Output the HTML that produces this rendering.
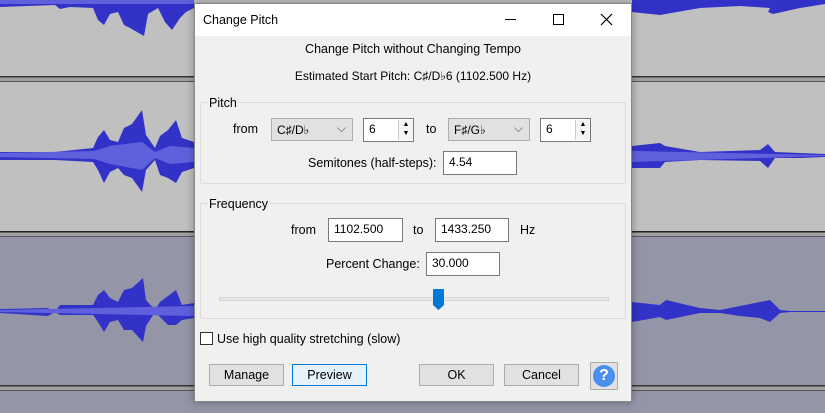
<!DOCTYPE html>
<html><head><style>
*{margin:0;padding:0;box-sizing:border-box}
body{width:825px;height:413px;overflow:hidden;position:relative;font-family:"Liberation Sans","DejaVu Sans",sans-serif;font-size:12px;color:#000;background:#9496a8}
.a{position:absolute}
.dlg{left:194px;top:3px;width:438px;height:399px;background:#f0f0f0;border:1px solid #888;box-shadow:0 0 8px rgba(0,0,0,.35)}
.t{position:absolute;white-space:nowrap}
.box{position:absolute;background:#fff;border:1px solid #7a7a7a;padding:3px 0 0 5px}
.cb{position:absolute;background:#e1e1e1;border:1px solid #adadad;padding:4px 0 0 5px}
.grp{position:absolute;border:1px solid #dcdcdc;border-radius:2px}
.btn{position:absolute;background:#e1e1e1;border:1px solid #adadad;text-align:center;line-height:21px;font-size:12.5px}
</style></head><body>
<svg class="a" style="left:0;top:0" width="825" height="413">
<rect x="0" y="0" width="825" height="76" fill="#c0c0c0"/>
<rect x="0" y="76" width="825" height="6" fill="#a0a0a0"/>
<rect x="0" y="76" width="825" height="1.5" fill="#333"/>
<rect x="0" y="81" width="825" height="1" fill="#555"/>
<rect x="0" y="82" width="825" height="149" fill="#c0c0c0"/>
<rect x="0" y="231" width="825" height="6" fill="#a0a0a0"/>
<rect x="0" y="231" width="825" height="1.5" fill="#222"/>
<rect x="0" y="236" width="825" height="1" fill="#555"/>
<rect x="0" y="237" width="825" height="148" fill="#9496a8"/>
<rect x="0" y="385" width="825" height="6" fill="#a0a0a0"/>
<rect x="0" y="385" width="825" height="1.5" fill="#333"/>
<rect x="0" y="390" width="825" height="1" fill="#555"/>
<!-- track1 -->
<polygon fill="#3232c8" points="0,0 0,7 55,5 60,9 70,7 93,8 98,20 104,25 110,14 118,12 124,25 130,28 144,36 148,14 158,8 165,22 172,30 180,18 186,12 194,8 194,0"/>
<polygon fill="#6060dc" points="0,0 0,4 194,4 194,0"/>
<polygon fill="#3232c8" points="632,0 632,12 660,15 700,8 740,6 770,8 768,12 773,14 800,8 825,4 825,0"/>
<!-- track2 -->
<polygon fill="#3232c8" points="0,152 55,152 93,148 98,137 104,130 110,140 118,142 124,128 132,124 142,110 146,135 155,148 160,136 168,130 176,120 182,138 194,142 194,168 182,172 176,183 168,178 160,175 155,160 146,170 142,192 132,178 124,175 118,168 110,172 104,183 98,170 93,162 55,160 0,160"/>
<polygon fill="#6060dc" points="0,153 94,151 110,146 142,142 155,152 170,146 194,148 194,162 170,164 155,158 142,170 110,164 94,159 0,157"/>
<polygon fill="#3232c8" points="632,146 660,143 665,146 700,152 760,150 768,144 775,152 800,153 825,154 825,157 800,158 775,158 768,168 760,161 700,160 665,162 660,168 632,168"/>
<polygon fill="#6060dc" points="632,151 825,155 825,156 632,162"/>
<!-- track3 -->
<polygon fill="#3232c8" points="0,309 48,308 55,312 60,305 93,305 98,295 104,290 110,298 118,302 124,290 132,288 143,278 146,300 155,310 160,302 168,296 176,290 182,305 194,303 194,318 182,320 176,325 168,325 155,312 146,326 143,342 132,330 124,330 118,320 110,322 104,332 98,322 93,315 60,315 55,312 48,316 0,313"/>
<polygon fill="#6060dc" points="0,310 194,306 194,316 0,312"/>
<polygon fill="#3232c8" points="632,302 660,305 666,300 700,308 720,310 740,306 760,302 770,300 780,310 790,311 825,311 825,312 790,312 780,313 770,322 760,318 740,316 720,313 700,313 666,320 660,317 632,322"/>
</svg>

<div class="a dlg">
  <div class="a" style="left:0;top:0;width:436px;height:32px;background:#fff"></div>
  <div class="t" style="left:8px;top:9px;font-size:12.5px">Change Pitch</div>
  <div class="a" style="left:310px;top:15px;width:11px;height:1px;background:#000"></div>
  <div class="a" style="left:358px;top:10px;width:11px;height:11px;border:1px solid #000"></div>
  <svg class="a" style="left:405px;top:9px" width="13" height="13"><path d="M1 1L12 12M12 1L1 12" stroke="#000" stroke-width="1.2"/></svg>

  <div class="t" style="left:0;width:436px;text-align:center;top:38px;font-size:12.5px">Change Pitch without Changing Tempo</div>
  <div class="t" style="left:0;width:436px;text-align:center;top:65px">Estimated Start Pitch: C♯/D♭6 (1102.500 Hz)</div>

  <div class="grp" style="left:5px;top:98px;width:426px;height:82px"></div>
  <div class="t" style="left:13px;top:92px;background:#f0f0f0;padding:0 1px;font-size:12.5px">Pitch</div>
  <div class="t" style="left:38px;top:118px;font-size:12.5px">from</div>
  <div class="cb" style="left:76px;top:114px;width:82px;height:23px">C♯/D♭<span style="position:absolute;right:6px;top:2px;color:#555">⌵</span></div>
  <div class="box" style="left:168px;top:114px;width:51px;height:24px">6</div>
  <div class="a" style="left:203px;top:116px;width:15px;height:20px;border-left:1px solid #ccc;font-size:7px;line-height:9px;text-align:center;background:#f4f4f4">▲<br>▼</div>
  <div class="t" style="left:231px;top:118px;font-size:12.5px">to</div>
  <div class="cb" style="left:253px;top:114px;width:82px;height:23px">F♯/G♭<span style="position:absolute;right:6px;top:2px;color:#555">⌵</span></div>
  <div class="box" style="left:345px;top:114px;width:51px;height:24px">6</div>
  <div class="a" style="left:380px;top:116px;width:15px;height:20px;border-left:1px solid #ccc;font-size:7px;line-height:9px;text-align:center;background:#f4f4f4">▲<br>▼</div>
  <div class="t" style="left:113px;top:152px;font-size:12.5px">Semitones (half-steps):</div>
  <div class="box" style="left:248px;top:147px;width:74px;height:24px">4.54</div>

  <div class="grp" style="left:5px;top:199px;width:426px;height:116px"></div>
  <div class="t" style="left:13px;top:193px;background:#f0f0f0;padding:0 1px;font-size:12.5px">Frequency</div>
  <div class="t" style="left:96px;top:219px;font-size:12.5px">from</div>
  <div class="box" style="left:133px;top:214px;width:75px;height:24px">1102.500</div>
  <div class="t" style="left:218px;top:219px;font-size:12.5px">to</div>
  <div class="box" style="left:240px;top:214px;width:74px;height:24px">1433.250</div>
  <div class="t" style="left:325px;top:219px;font-size:12.5px">Hz</div>
  <div class="t" style="left:131px;top:253px;font-size:12.5px">Percent Change:</div>
  <div class="box" style="left:231px;top:248px;width:74px;height:24px">30.000</div>
  <div class="a" style="left:24px;top:293px;width:390px;height:4px;background:#e7e7e7;border:1px solid #d6d6d6"></div>
  <svg class="a" style="left:238px;top:285px" width="11" height="22"><path d="M0 1Q0 0 1 0H10Q11 0 11 1V16L5.5 21L0 16Z" fill="#0078d7"/></svg>

  <div class="a" style="left:5px;top:328px;width:13px;height:13px;border:1px solid #333;background:#fff"></div>
  <div class="t" style="left:22px;top:328px;font-size:12.5px">Use high quality stretching (slow)</div>

  <div class="btn" style="left:14px;top:360px;width:75px;height:22px">Manage</div>
  <div class="btn" style="left:97px;top:360px;width:75px;height:22px;background:#e5f1fb;border-color:#0078d7">Preview</div>
  <div class="btn" style="left:224px;top:360px;width:75px;height:22px">OK</div>
  <div class="btn" style="left:309px;top:360px;width:75px;height:22px">Cancel</div>
  <div class="a" style="left:395px;top:358px;width:28px;height:28px;background:#e1e1e1;border:1px solid #adadad"></div>
  <div class="a" style="left:398px;top:361px;width:22px;height:22px;border-radius:50%;background:#4a8ef0;color:#fff;font-weight:bold;font-size:16px;text-align:center;line-height:22px">?</div>
</div>
</body></html>
